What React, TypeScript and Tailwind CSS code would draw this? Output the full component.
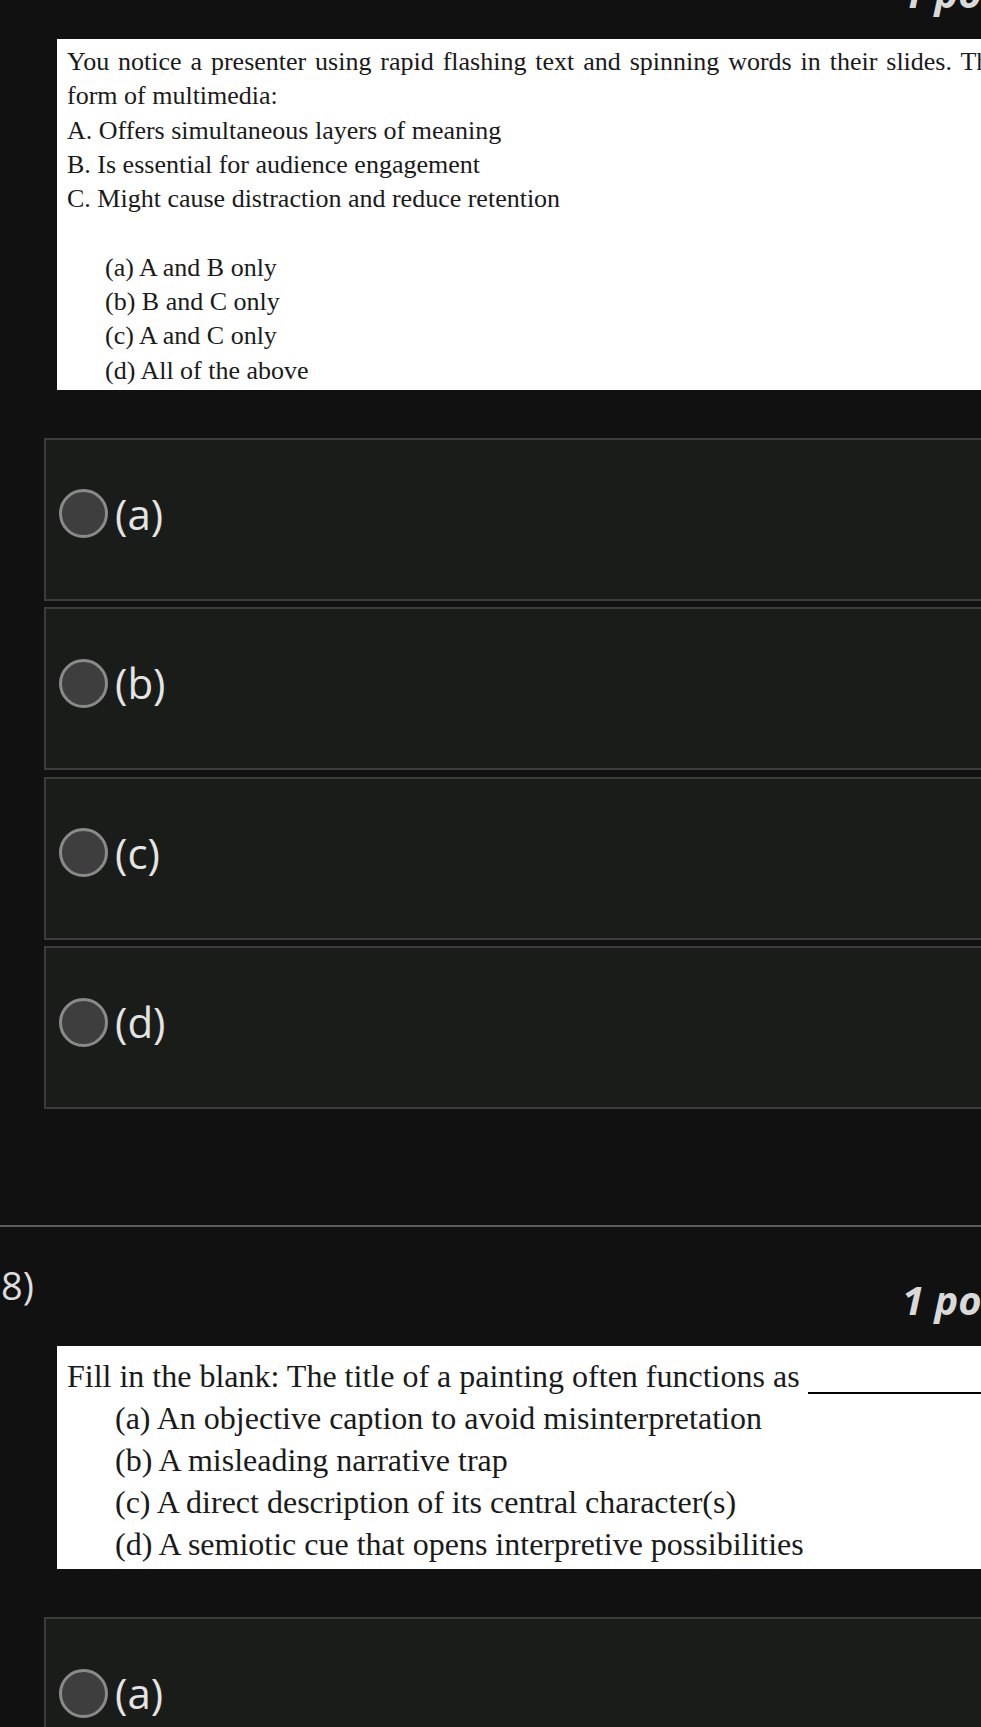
import React from 'react';

interface QuestionProps {
  num: number;
  children: React.ReactNode;
  options: string[];
  top?: boolean;
}

const Choice: React.FC<{ label: string }> = ({ label }) => {
  return (
    <div className="h-[163px] flex items-center pb-[11px] pl-[13px] bg-[#1a1c1a] border-2 border-[#3c3c3c]">
      <span className="w-[49px] h-[49px] rounded-full bg-[#3e3e3e] border-[3px] border-[#8a8a8a] shrink-0" />
      <span className="ml-[7px] text-[42px] leading-none text-[#e4e4e4]">{label}</span>
    </div>
  );
};

const Question: React.FC<QuestionProps> = ({ num, children, options, top }) => {
  return (
    <section className={top ? '-mt-[50px]' : 'mt-[116px]'}>
      {!top && <div className="h-[2px] bg-[#5c5c5c] mb-[30px]" />}

      <div className="h-[89px] flex items-start">
        <div className="w-[902px] shrink-0 pl-[1px] text-[38px] text-[#dcdcdc]">{num})</div>
        <div className="mt-[13px] text-[40px] font-bold italic text-[#d9d9d9] whitespace-nowrap">1 point</div>
      </div>

      <div className="ml-[57px] bg-white text-[#1a1a1a] font-['Liberation_Serif',serif] whitespace-nowrap">
        {children}
      </div>

      <div className="ml-[44px] mt-[48px] flex flex-col gap-[6.5px]">
        {options.map((o) => (
          <Choice key={o} label={o} />
        ))}
      </div>
    </section>
  );
};

export default function App() {
  return (
    <div className="w-full min-h-screen overflow-hidden bg-[#111111] font-['Open_Sans',sans-serif]">
      <div className="w-[1200px]">
        <Question num={7} top options={['(a)', '(b)', '(c)', '(d)']}>
          <div className="pt-[6px] pb-[2px] pl-[10px] text-[26px] leading-[34.3px]">
            <p className="[word-spacing:2.4px]">
              You notice a presenter using rapid flashing text and spinning words in their slides. This
            </p>
            <p>form of multimedia:</p>
            <p>A. Offers simultaneous layers of meaning</p>
            <p>B. Is essential for audience engagement</p>
            <p>C. Might cause distraction and reduce retention</p>
            <p>&nbsp;</p>
            <div className="pl-[38px]">
              <p>(a) A and B only</p>
              <p>(b) B and C only</p>
              <p>(c) A and C only</p>
              <p>(d) All of the above</p>
            </div>
          </div>
        </Question>

        <Question num={8} options={['(a)', '(b)', '(c)', '(d)']}>
          <div className="pt-[9px] pb-[4px] pl-[10px] text-[32px] leading-[42px]">
            <p>
              Fill in the blank: The title of a painting often functions as{' '}
              <span className="inline-block w-[300px] h-[20px] border-b-2 border-black align-[-7px]" />
            </p>
            <div className="pl-[48px]">
              <p>(a) An objective caption to avoid misinterpretation</p>
              <p>(b) A misleading narrative trap</p>
              <p>(c) A direct description of its central character(s)</p>
              <p>(d) A semiotic cue that opens interpretive possibilities</p>
            </div>
          </div>
        </Question>
      </div>
    </div>
  );
}
